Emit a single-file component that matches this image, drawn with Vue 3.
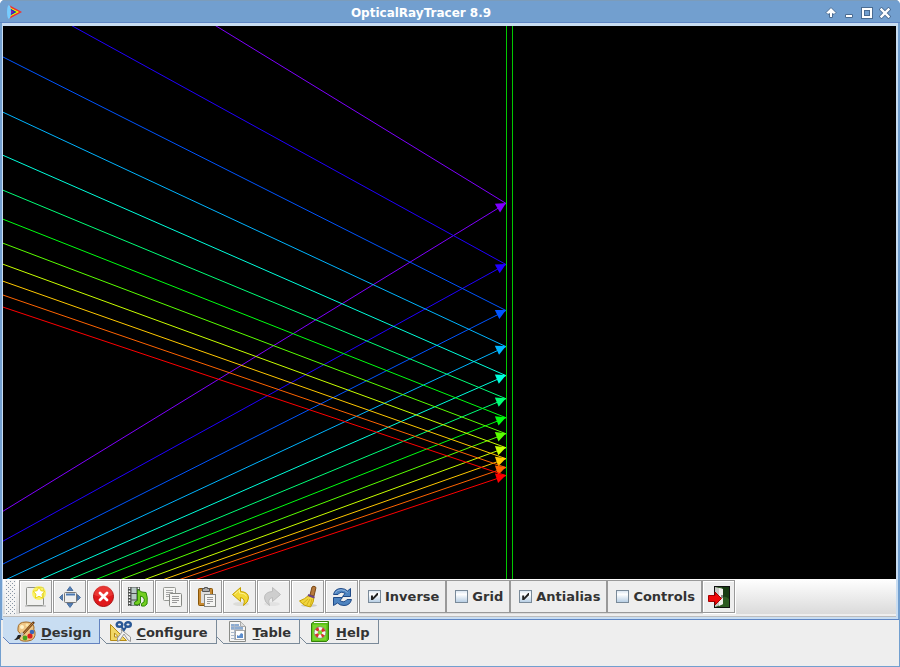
<script setup>
import { ref, reactive } from 'vue'

const PLANE_X = 503
const WIDTH = 893

// Each beam: height on the image plane, slope of its paths, and colour
const beams = [
  { y: 177.4, slope: 0.612, color: '#7f00ff' },
  { y: 238.5, slope: 0.55, color: '#2000ff' },
  { y: 284.5, slope: 0.504, color: '#0055ff' },
  { y: 320.6, slope: 0.466, color: '#00b4ff' },
  { y: 349.6, slope: 0.438, color: '#00ffdc' },
  { y: 372.7, slope: 0.4145, color: '#00ff78' },
  { y: 391.7, slope: 0.3946, color: '#00ff10' },
  { y: 407.7, slope: 0.3787, color: '#5aff00' },
  { y: 421.7, slope: 0.3648, color: '#c8ff00' },
  { y: 432.7, slope: 0.3529, color: '#ffc800' },
  { y: 441.6, slope: 0.343, color: '#ff6400' },
  { y: 449.6, slope: 0.335, color: '#ff0000' },
].map((b) => {
  const reach = b.slope * PLANE_X
  const len = Math.hypot(1, b.slope)
  const ux = 1 / len
  const uy = -b.slope / len
  const bx = PLANE_X - 10 * ux
  const by = b.y - 0.5 - 10 * uy
  return {
    color: b.color,
    path: `0,${b.y - reach} ${PLANE_X},${b.y} 0,${b.y + reach}`,
    head: `${PLANE_X},${b.y - 0.5} ${bx - 5 * uy},${by + 5 * ux} ${bx + 5 * uy},${by - 5 * ux}`,
  }
})

const options = reactive([
  { label: 'Inverse', on: true },
  { label: 'Grid', on: false },
  { label: 'Antialias', on: true },
  { label: 'Controls', on: false },
])

const tabs = ['Design', 'Configure', 'Table', 'Help']
const active = ref('Design')
</script>

<template>
  <div class="window">
    <header class="titlebar">
      <svg class="logo" viewBox="0 0 16 16">
        <path d="M2 0L15 7L2 14Z" fill="#e33" />
        <path d="M2 2L12 7L2 12Z" fill="#ff0" />
        <path d="M2 3L10 7L2 11Z" fill="#2b3" />
        <path d="M3 3.500L9 7L3 10.500Z" fill="#22c" />
        <path d="M4 5L7 7L4 9Z" fill="#82a" />
        <ellipse cx="2" cy="7" rx="2" ry="7" fill="#7cf" />
      </svg>
      <h1>OpticalRayTracer 8.9</h1>
      <div class="wm">
        <button aria-label="Shade"><svg viewBox="0 0 12 12"><path d="M6 .5L11 5.500L9 7.500L7.500 6.500V10.500H4.500V6.500L3 7.500L1 5.500Z" fill="#fff" stroke="#4b6c92" /></svg></button>
        <button aria-label="Minimize"><svg viewBox="0 0 12 12"><path d="M2.500 7.500H9.500V10.500H2.500Z" fill="#fff" stroke="#4b6c92" /></svg></button>
        <button aria-label="Maximize"><svg viewBox="0 0 12 12"><path d="M2 2H10V10H2Z" fill="none" stroke="#4b6c92" stroke-width="4" /><path d="M2 2H10V10H2Z" fill="none" stroke="#fff" stroke-width="2" /></svg></button>
        <button aria-label="Close"><svg viewBox="0 0 12 12"><path d="M2.500 2.500L9.500 9.500M9.500 2.500L2.500 9.500" stroke="#4b6c92" stroke-width="4" stroke-linecap="square" /><path d="M2.500 2.500L9.500 9.500M9.500 2.500L2.500 9.500" stroke="#fff" stroke-width="2.400" stroke-linecap="square" /></svg></button>
      </div>
    </header>

    <main class="pane">
      <svg class="bench" :viewBox="`0 0 ${WIDTH} 553`">
        <g v-for="b in beams" :key="b.color">
          <polyline :points="b.path" fill="none" :stroke="b.color" />
          <polygon :points="b.head" :fill="b.color" />
        </g>
        <path d="M503.500 0V553M509.500 0V553" stroke="#00c800" />
      </svg>

      <div class="toolbar">
        <span class="grip"></span>
        <button class="tool" aria-label="New">
          <svg viewBox="0 0 24 24">
            <path d="M1 20H22V22H1Z" fill="#ccc" />
            <rect x="2.500" y="2.500" width="17" height="18" rx="1" fill="#f1f1ef" stroke="#8d8f8b" />
            <circle cx="15" cy="8" r="7" fill="#fcf23a" opacity=".75" />
            <path d="M15 2L16.900 5.700L21 6.300L18 9.200L18.700 13.200L15 11.300L11.300 13.200L12 9.200L9 6.300L13.100 5.700Z" fill="#fff" stroke="#ecd615" />
          </svg>
        </button>
        <button class="tool" aria-label="Fit view">
          <svg viewBox="0 0 24 24">
            <path d="M12 1.500L15 5.500H9ZM12 22.500L15 18.500H9ZM1.500 12.500L4.500 9.500V15.500ZM22.500 12.500L19.500 9.500V15.500Z" fill="#5580b4" stroke="#2c558e" stroke-width=".7" />
            <rect x="6.500" y="7.500" width="12" height="10" rx="1" fill="#eee" stroke="#777" />
            <path d="M8 9.500H17" stroke="#4a79b4" stroke-width="2" />
          </svg>
        </button>
        <button class="tool" aria-label="Stop">
          <svg viewBox="0 0 24 24">
            <circle cx="11.500" cy="11.500" r="10" fill="#e0181b" stroke="#a90c0c" />
            <path d="M2 10A9.500 9.500 0 0 1 21 10Q12 14 2 10Z" fill="#f24a43" opacity=".6" />
            <path d="M8 8L15 15M15 8L8 15" stroke="#fff" stroke-width="2.800" stroke-linecap="round" />
          </svg>
        </button>
        <button class="tool" aria-label="Media">
          <svg viewBox="0 0 24 24">
            <path d="M2 2H14V21H2Z" fill="#4a4d4b" />
            <path d="M5.500 2.500H10.500V8H5.500ZM5.500 9H10.500V14.500H5.500ZM5.500 15.500H10.500V20.500H5.500Z" fill="#b8c8c4" />
            <path d="M3.500 2.500V21M12.500 2.500V21" stroke="#fff" stroke-width="1.500" stroke-dasharray="1.500 1.500" />
            <path d="M11.500 4.500Q16 8 20 7.500Q22 12 21 19Q19 22 15.500 21Q14 18.500 18 17Q19 14 17 12L14.500 11V18Q12 21 8.500 19.500Q7.500 16.500 11.500 15.500Z" fill="#72cf20" stroke="#2e8708" />
          </svg>
        </button>
        <button class="tool" aria-label="Copy">
          <svg viewBox="0 0 24 24">
            <rect x="3.500" y="2.500" width="12" height="13" rx="1" fill="#f5f5f3" stroke="#969894" />
            <path d="M6 5.500H13M6 7.500H13M6 9.500H13M6 11.500H10" stroke="#a6a6a6" />
            <rect x="9.500" y="8.500" width="12" height="13" rx="1" fill="#f5f5f3" stroke="#868884" />
            <path d="M12 11.500H19M12 13.500H19M12 15.500H19M12 17.500H17" stroke="#999" />
          </svg>
        </button>
        <button class="tool" aria-label="Paste">
          <svg viewBox="0 0 24 24">
            <rect x="4.500" y="3.500" width="14" height="17" rx="1" fill="#c78a32" stroke="#885609" />
            <path d="M7 6H16V18H7Z" fill="#ddd" />
            <path d="M8.500 6.500V3.500H10.500V2.500H13.500V3.500H15.500V6.500Z" fill="#aaa" stroke="#555" />
            <rect x="10.500" y="9.500" width="11" height="12" fill="#f5f5f3" stroke="#868884" />
            <path d="M13 12.500H19M13 14.500H19M13 16.500H19M13 18.500H16" stroke="#999" />
          </svg>
        </button>
        <button class="tool" aria-label="Undo">
          <svg viewBox="0 0 24 24">
            <ellipse cx="13" cy="19" rx="8" ry="2" fill="#dcdcd8" />
            <path d="M4.500 9.500L12.500 2.500V6.500Q20.500 7 20.500 13Q20.500 17 15.500 20.500Q18 13.500 12.500 12.500V16.500Z" fill="#f2d937" stroke="#c4a000" stroke-linejoin="round" />
            <path d="M6.500 9.500L11.500 5V8Q17 8 18.500 11" fill="none" stroke="#fff28a" />
          </svg>
        </button>
        <button class="tool" aria-label="Redo" disabled>
          <svg viewBox="0 0 24 24">
            <ellipse cx="10" cy="19" rx="8" ry="2" fill="#e2e2e2" />
            <path d="M18.500 9.500L10.500 2.500V6.500Q2.500 7 2.500 13Q2.500 17 7.500 20.500Q5 13.500 10.500 12.500V16.500Z" fill="#cecece" stroke="#bdbdbd" stroke-linejoin="round" />
          </svg>
        </button>
        <button class="tool" aria-label="Clear">
          <svg viewBox="0 0 24 24">
            <ellipse cx="13" cy="20.500" rx="8" ry="1.500" fill="#ccc" />
            <path d="M14 10L16 2Q18 0 20 2.500L18 11Z" fill="#b77a3d" stroke="#7b4a17" />
            <path d="M12.500 10.500Q9 14 3.500 16Q7 21 14.500 22Q18 17 18 12Z" fill="#f1d53c" stroke="#c4a000" />
            <path d="M12 14L7 18.500M14 14L10.500 20.500M16 14L14 21" stroke="#d5b31c" />
            <path d="M12 10L18.500 12.500" stroke="#6c4383" stroke-width="2" />
          </svg>
        </button>
        <button class="tool" aria-label="Refresh">
          <svg viewBox="0 0 24 24">
            <path d="M3.500 9.500Q5 3.500 11 3.500Q15 3.500 17.500 6L20.500 3.500V11.500H12.500L15 8.500Q11 5.500 8 9.500Z" fill="#4e84c0" stroke="#204a87" stroke-linejoin="round" />
            <path d="M21.500 14.500Q20 20.500 14 20.500Q10 20.500 7.500 18L3.500 20.500V12.500H12.500L10 15.500Q14 18.500 17 14.500Z" fill="#4e84c0" stroke="#204a87" stroke-linejoin="round" />
            <path d="M5 8.500Q7 4.500 11 4.800Q15 5 17.500 7.500" fill="none" stroke="#91b4dc" />
          </svg>
        </button>
        <label v-for="o in options" :key="o.label" class="toggle">
          <input v-model="o.on" type="checkbox" />
          <span>{{ o.label }}</span>
        </label>
        <button class="tool" aria-label="Exit">
          <svg viewBox="0 0 24 24">
            <rect x="7.500" y="1.500" width="15" height="21" fill="#2d5b22" stroke="#111" />
            <path d="M15 2H22V14Q18 10 15 13Z" fill="#183b12" />
            <path d="M8 2L16 4V19L8 22Z" fill="#c9c9c5" />
            <path d="M12 3L16 4V19L12 21Z" fill="#efefec" />
            <path d="M15 10V13" stroke="#222" />
            <path d="M1.500 10.500H8V7L14.500 13.500L8 20V16.500H1.500Z" fill="#f00808" stroke="#a40000" />
          </svg>
        </button>
      </div>
    </main>

    <nav class="tabs" role="tablist">
      <button
        v-for="t in tabs"
        :key="t"
        role="tab"
        :aria-selected="active === t"
        :class="['tab', { active: active === t }]"
        @click="active = t"
      >
        <svg v-if="t === 'Design'" viewBox="0 0 24 24">
          <path d="M5 8Q5 2 13 2Q20 2 21 7Q20 9 22 12Q23 20 15 21Q7 22 6 18Q9 15 7 13Q4 12 5 8Z" fill="#efc584" stroke="#a26a24" />
          <circle cx="9" cy="7" r="2" fill="#fff3c7" />
          <circle cx="14" cy="5" r="1.500" fill="#fbe7ae" />
          <circle cx="19" cy="12" r="2.300" fill="#3768bb" />
          <circle cx="17" cy="16" r="2.600" fill="#d82020" />
          <circle cx="12" cy="18" r="2.400" fill="#46a51c" />
          <path d="M21 2L9 15" stroke="#673c14" stroke-width="2.500" />
          <path d="M20 3L10 14" stroke="#cf8a42" />
          <path d="M10 13L7 16" stroke="#bbb" stroke-width="3" />
          <path d="M8 15Q8 20 1 20Q4 18 5 15Z" fill="#222" />
        </svg>
        <svg v-else-if="t === 'Configure'" viewBox="0 0 24 24">
          <path d="M2.500 4.500L18.500 20.500H2.500ZM6.500 13V17H10.500Z" fill="#f1d765" fill-rule="evenodd" stroke="#b58b14" />
          <path d="M13 9L16 12L22.500 17V21.500L20 20L16 14L12 20L9.500 21.500V18L14 12Z" fill="#f0f0f0" stroke="#999" />
          <ellipse cx="11.500" cy="4.500" rx="2.800" ry="2.300" fill="none" stroke="#285795" stroke-width="2.400" />
          <ellipse cx="20" cy="4.500" rx="2.800" ry="2.300" fill="none" stroke="#285795" stroke-width="2.400" />
          <path d="M13.500 7L16 10L18 7" fill="none" stroke="#285795" stroke-width="2" />
        </svg>
        <svg v-else-if="t === 'Table'" viewBox="0 0 24 24">
          <path d="M4.500 1.500H15.500L20.500 6.500V21.500H4.500Z" fill="#f6f6f5" stroke="#8a8c88" />
          <path d="M15.500 1.500V6.500H20.500" fill="#ddd" stroke="#aaa" />
          <path d="M6 4H14V7H18V9H6Z" fill="#8cacd2" />
          <path d="M6 6.500H16M6 9.500H18M6 12.500H18M6 15.500H18M6 18.500H18M9.500 4V20" stroke="#aab8ca" />
          <rect x="10.500" y="10.500" width="9" height="9" fill="#fff" stroke="#555" stroke-dasharray="1 1" />
          <path d="M12 18V15L14 16L16 13L18 14V18Z" fill="#5c8dcc" />
        </svg>
        <svg v-else viewBox="0 0 24 24">
          <path d="M3.500 3.500L6.500 1.500H20.500V19.500L18.500 21.500H3.500Z" fill="#55ba15" stroke="#348208" />
          <path d="M6 2.500H19.500" stroke="#fff" />
          <path d="M4.500 4.500H18.500V20.500H4.500Z" fill="#79d62b" />
          <circle cx="12" cy="12.500" r="4" fill="none" stroke="#f8f8f8" stroke-width="3.500" />
          <circle cx="12" cy="12.500" r="4" fill="none" stroke="#d93229" stroke-width="3.500" stroke-dasharray="3.140 3.140" stroke-dashoffset="1.570" transform="rotate(45 12 12.500)" />
          <circle cx="12" cy="12.500" r="5.800" fill="none" stroke="#777" stroke-width=".6" />
        </svg>
        <span class="name"><u>{{ t[0] }}</u>{{ t.slice(1) }}</span>
      </button>
    </nav>
  </div>
</template>

<style>
body { margin: 0; background: #fff; }
</style>

<style scoped>
.window {
  box-sizing: border-box;
  min-height: 100vh;
  display: flex;
  flex-direction: column;
  background: #eee;
  border-bottom: 1px solid #729fcf;
  border-radius: 5px 5px 0 0;
  box-shadow: inset 1px 0 #729fcf, inset -1px 0 #729fcf;
  overflow: hidden;
  font: bold 13px "DejaVu Sans", sans-serif;
  color: #333;
}
button { font: inherit; color: inherit; margin: 0; }
.titlebar {
  box-sizing: border-box;
  height: 23px;
  padding: 2px 9px 0 7px;
  display: grid;
  grid-template-columns: 16px 1fr 66px;
  align-items: center;
  background: #729fcf;
  border-top: 1px solid #7c9cba;
  border-bottom: 1px solid #5f86c4;
}
.logo { width: 16px; height: 16px; }
.titlebar h1 {
  margin: 0;
  padding-right: 6px;
  text-align: center;
  font-size: 12px;
  line-height: 18px;
  color: #fff;
}
.wm { display: flex; gap: 6px; }
.wm button { width: 12px; height: 12px; padding: 0; border: 0; background: none; }
.wm svg { display: block; width: 12px; height: 12px; }
.pane {
  padding: 3px 2px 2px 1px;
  border: solid #729fcf;
  border-width: 0 2px 0 2px;
  background: #c8ddf2;
}
.bench { display: block; width: 100%; background: #000; }
.toolbar {
  box-sizing: border-box;
  height: 38px;
  padding: 1px 0 0 2px;
  display: flex;
  align-items: flex-start;
  background: linear-gradient(#fff, #dadada 35px, #eee 35px, #eee 37px, #bcbcbc 37px);
}
.grip {
  width: 11px;
  height: 34px;
  margin-right: 3px;
  background:
    conic-gradient(from 90deg at 3px 3px, #8794a3 25%, transparent 0) 0 0 / 4px 4px,
    conic-gradient(from 90deg at 3px 3px, #8794a3 25%, transparent 0) 2px 2px / 4px 4px,
    #f4f4f4;
}
.tool {
  box-sizing: border-box;
  width: 33px;
  height: 33px;
  margin-right: 1px;
  padding: 4px;
  border: 1px solid #999;
  background: #eee;
  box-shadow: 1px 1px #fff, inset 1px 1px #fff;
}
.tool svg { display: block; width: 24px; height: 24px; }
.toggle {
  box-sizing: border-box;
  height: 33px;
  padding: 0 6px 0 8px;
  display: flex;
  align-items: center;
  gap: 4px;
  border: 1px solid #999;
  background: #eee;
}
.toggle input {
  appearance: none;
  width: 13px;
  height: 13px;
  margin: 0;
  border: 1px solid #7a8a99;
  background: linear-gradient(#dbe6f2, #fff 30%, #b8cfe5);
}
.toggle input:checked::before {
  content: "";
  display: block;
  width: 7px;
  height: 7px;
  margin: 2px;
  background: #222;
  clip-path: polygon(0 35%, 28% 35%, 28% 65%, 85% 0, 100% 0, 100% 30%, 28% 100%, 0 100%);
}
.tabs {
  display: flex;
  height: 25px;
  margin: 0 1px;
  padding-left: 2px;
  background: linear-gradient(#5f86c4 1px, transparent 1px);
}
.tab {
  position: relative;
  box-sizing: border-box;
  height: 25px;
  padding: 1px 8px 0 8px;
  display: flex;
  align-items: center;
  gap: 4px;
  border: solid #7a8a99;
  border-width: 0 1px 1px 0;
  background: linear-gradient(#5f86c4 1px, #eee 1px);
}
.tab.active { border-color: #6382bf; background: #c8ddf2; padding-left: 10px; }
.tab::before {
  content: "";
  position: absolute;
  left: 0;
  bottom: -1px;
  width: 7px;
  height: 7px;
  background: linear-gradient(to top right, #eee 44%, #7a8a99 46%, #7a8a99 54%, transparent 56%);
}
.tab.active::before { background: linear-gradient(to top right, #eee 44%, #6382bf 46%, #6382bf 54%, transparent 56%); }
.tab svg { width: 24px; height: 24px; }
.name { padding-top: 2px; line-height: 18px; }
.name u { text-underline-offset: 2px; text-decoration-thickness: 1px; }
</style>
